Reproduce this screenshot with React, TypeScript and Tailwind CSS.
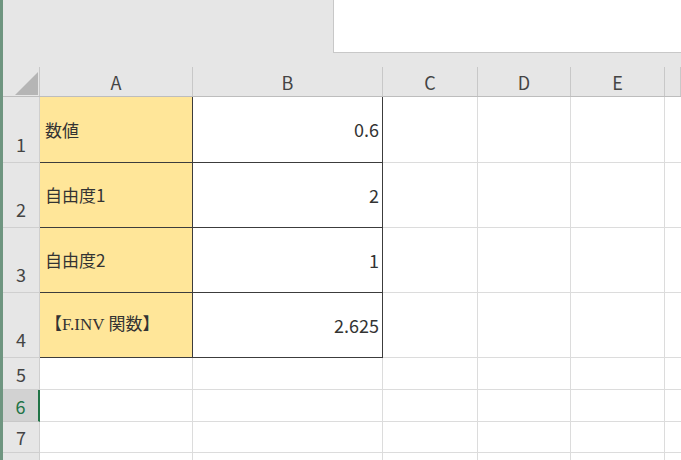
import React from 'react';

const font = { fontFamily: '"Noto Sans CJK JP", "Noto Sans", sans-serif' };

const cols = ['A', 'B', 'C', 'D', 'E', ''];

type Row = { n: number; h: string; a?: string; b?: string; serif?: boolean };

const rows: Row[] = [
  { n: 1, h: 'h-[66px]', a: '数値', b: '0.6' },
  { n: 2, h: 'h-[65px]', a: '自由度1', b: '2' },
  { n: 3, h: 'h-[65px]', a: '自由度2', b: '1' },
  { n: 4, h: 'h-[65px]', a: '【F.INV 関数】', b: '2.625', serif: true },
  { n: 5, h: 'h-[32px]' },
  { n: 6, h: 'h-[32px]' },
  { n: 7, h: 'h-[31px]' },
  { n: 8, h: 'h-[31px]' },
];

const gridCols = 'grid grid-cols-[37px_153px_190px_95px_93px_94px_1fr]';

export default function App() {
  return (
    <div className="flex h-[460px] w-[681px] overflow-hidden bg-white text-[#333]" style={font}>
      <div className="w-[3px] shrink-0 bg-[#6f9580]" />
      <div className="flex min-w-0 flex-1 flex-col">
        <div className="flex h-[67px] shrink-0 items-start justify-end bg-[#e6e6e6]">
          <div className="h-[53px] w-[348px] border-b border-l border-[#c8c8c8] bg-white" />
        </div>

        {/* column headers */}
        <div className={`${gridCols} h-[30px] shrink-0 border-b border-[#bdbdbd] bg-[#e6e6e6]`}>
          <div className="relative border-r border-[#c8c8c8]">
            <svg className="absolute left-[12px] top-[5px]" width="23" height="23" viewBox="0 0 23 23">
              <polygon points="23,0 23,23 0,23" fill="#b5b5b5" />
            </svg>
          </div>
          {cols.map((c, i) => (
            <div
              key={i}
              className="flex items-center justify-center border-r border-[#c8c8c8] text-[18px] leading-none text-[#444]"
            >
              {c}
            </div>
          ))}
        </div>

        {/* rows */}
        {rows.map((r) => {
          const boxed = r.n <= 4;
          const selected = r.n === 6;
          const tall = r.n <= 4;
          return (
            <div key={r.n} className={`${gridCols} ${r.h} shrink-0`}>
              <div
                className={`flex justify-center text-[18px] leading-none ${
                  tall ? 'items-end pb-[9px]' : 'items-center'
                } ${
                  selected
                    ? 'border-b border-r-2 border-b-[#c8c8c8] border-r-[#217346] bg-[#d2d2d2] text-[#217346]'
                    : 'border-b border-r border-[#cfcfcf] bg-[#e6e6e6] text-[#444]'
                }`}
              >
                {r.n < 8 ? r.n : ''}
              </div>
              <div
                className={`flex items-center pl-[5px] text-[17px] ${
                  boxed ? 'border-b-[1.5px] border-r-[1.5px] border-[#3c3c3c] bg-[#ffe699]' : 'border-b border-r border-[#dcdcdc]'
                }`}
                style={r.serif ? { fontFamily: '"Liberation Serif", "Noto Sans CJK JP", serif' } : undefined}
              >
                {r.a}
              </div>
              <div
                className={`flex items-center justify-end pr-[3px] text-[18px] ${
                  boxed ? 'border-b-[1.5px] border-r-[1.5px] border-[#3c3c3c]' : 'border-b border-r border-[#dcdcdc]'
                }`}
              >
                {r.b}
              </div>
              <div className="border-b border-r border-[#dcdcdc]" />
              <div className="border-b border-r border-[#dcdcdc]" />
              <div className="border-b border-r border-[#dcdcdc]" />
              <div className="border-b border-[#dcdcdc]" />
            </div>
          );
        })}
      </div>
    </div>
  );
}
